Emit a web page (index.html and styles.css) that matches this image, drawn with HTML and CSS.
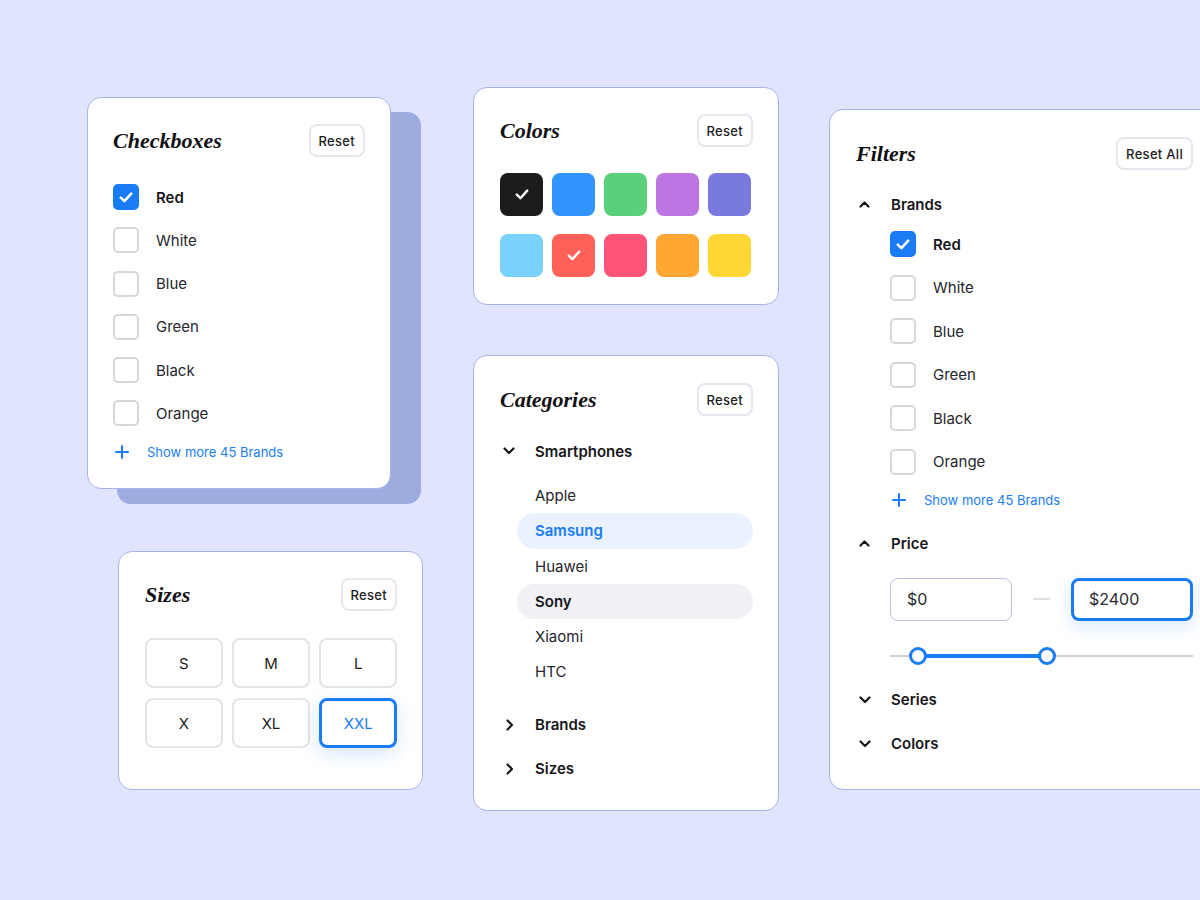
FILE: index.html
```html
<!DOCTYPE html>
<html lang="en">
<head>
  <meta charset="UTF-8">
  <title>Filters - UI kit</title>
  <link rel="stylesheet" href="styles.css">
</head>
<body>
  <main class="board">

    <div class="col col-left">
      <section class="card card-stacked checkboxes">
        <header class="card-head">
          <h2>Checkboxes</h2>
          <button class="reset">Reset</button>
        </header>
        <ul class="check-list">
          <li class="check on"><span class="box"><svg width="14" height="11" viewBox="0 0 14 11"><path d="M1.8 5.6l3.6 3.6 6.8-7.6"/></svg></span>Red</li>
          <li class="check"><span class="box"></span>White</li>
          <li class="check"><span class="box"></span>Blue</li>
          <li class="check"><span class="box"></span>Green</li>
          <li class="check"><span class="box"></span>Black</li>
          <li class="check"><span class="box"></span>Orange</li>
        </ul>
        <a class="more" href="#"><svg width="14" height="14" viewBox="0 0 14 14"><path d="M7 1v12M1 7h12"/></svg>Show more 45 Brands</a>
      </section>

      <section class="card sizes">
        <header class="card-head">
          <h2>Sizes</h2>
          <button class="reset">Reset</button>
        </header>
        <div class="size-grid">
          <button class="size">S</button>
          <button class="size">M</button>
          <button class="size">L</button>
          <button class="size">X</button>
          <button class="size">XL</button>
          <button class="size active">XXL</button>
        </div>
      </section>
    </div>

    <div class="col col-mid">
      <section class="card colors">
        <header class="card-head">
          <h2>Colors</h2>
          <button class="reset">Reset</button>
        </header>
        <div class="swatches">
          <span class="swatch sw-black on"><svg width="14" height="11" viewBox="0 0 14 11"><path d="M1.8 5.6l3.6 3.6 6.8-7.6"/></svg></span>
          <span class="swatch sw-blue"></span>
          <span class="swatch sw-green"></span>
          <span class="swatch sw-purple"></span>
          <span class="swatch sw-indigo"></span>
          <span class="swatch sw-sky"></span>
          <span class="swatch sw-red on"><svg width="14" height="11" viewBox="0 0 14 11"><path d="M1.8 5.6l3.6 3.6 6.8-7.6"/></svg></span>
          <span class="swatch sw-pink"></span>
          <span class="swatch sw-orange"></span>
          <span class="swatch sw-yellow"></span>
        </div>
      </section>

      <section class="card categories">
        <header class="card-head">
          <h2>Categories</h2>
          <button class="reset">Reset</button>
        </header>
        <div class="toggle first">
          <span class="ico"><svg class="chev-down" width="12" height="8" viewBox="0 0 12 8"><path d="M1.5 1.5 6 6l4.5-4.5"/></svg></span>Smartphones
        </div>
        <ul class="sub-list">
          <li>Apple</li>
          <li class="selected">Samsung</li>
          <li>Huawei</li>
          <li class="hovered">Sony</li>
          <li>Xiaomi</li>
          <li>HTC</li>
        </ul>
        <div class="toggle after-list">
          <span class="ico"><svg class="chev-right" width="8" height="12" viewBox="0 0 8 12"><path d="M1.5 1.5 6 6l-4.5 4.5"/></svg></span>Brands
        </div>
        <div class="toggle next">
          <span class="ico"><svg class="chev-right" width="8" height="12" viewBox="0 0 8 12"><path d="M1.5 1.5 6 6l-4.5 4.5"/></svg></span>Sizes
        </div>
      </section>
    </div>

    <div class="col col-right">
      <section class="card filters">
        <header class="card-head">
          <h2>Filters</h2>
          <button class="reset">Reset All</button>
        </header>

        <div class="toggle first">
          <span class="ico"><svg class="chev-up" width="11" height="7" viewBox="0 0 11 7"><path d="M1.5 5.5 5.5 1.5l4 4"/></svg></span>Brands
        </div>
        <div class="indent">
          <ul class="check-list">
            <li class="check on"><span class="box"><svg width="14" height="11" viewBox="0 0 14 11"><path d="M1.8 5.6l3.6 3.6 6.8-7.6"/></svg></span>Red</li>
            <li class="check"><span class="box"></span>White</li>
            <li class="check"><span class="box"></span>Blue</li>
            <li class="check"><span class="box"></span>Green</li>
            <li class="check"><span class="box"></span>Black</li>
            <li class="check"><span class="box"></span>Orange</li>
          </ul>
          <a class="more" href="#"><svg width="14" height="14" viewBox="0 0 14 14"><path d="M7 1v12M1 7h12"/></svg>Show more 45 Brands</a>
        </div>

        <div class="toggle price-head">
          <span class="ico"><svg class="chev-up" width="11" height="7" viewBox="0 0 11 7"><path d="M1.5 5.5 5.5 1.5l4 4"/></svg></span>Price
        </div>
        <div class="indent price">
          <div class="price-fields">
            <input class="field" type="text" value="$0" readonly>
            <span class="dash"></span>
            <input class="field focus" type="text" value="$2400" readonly>
          </div>
          <div class="range">
            <span class="range-fill"></span>
            <span class="thumb thumb-min"></span>
            <span class="thumb thumb-max"></span>
          </div>
        </div>

        <div class="toggle series">
          <span class="ico"><svg class="chev-down" width="12" height="8" viewBox="0 0 12 8"><path d="M1.5 1.5 6 6l4.5-4.5"/></svg></span>Series
        </div>
        <div class="toggle next">
          <span class="ico"><svg class="chev-down" width="12" height="8" viewBox="0 0 12 8"><path d="M1.5 1.5 6 6l4.5-4.5"/></svg></span>Colors
        </div>
      </section>
    </div>

  </main>
</body>
</html>
```

FILE: styles.css
```css
html, body {
  margin: 0;
  height: 100%;
  overflow: hidden;
}
body {
  background: #e0e4fd;
  font-family: Inter, 'Noto Sans', sans-serif;
  color: #1d1d22;
}
ul {
  list-style: none;
  margin: 0;
  padding: 0;
}

.board {
  display: flex;
  align-items: flex-start;
  gap: 50px;
  padding-left: 87px;
}
.col {
  display: flex;
  flex-direction: column;
  align-items: flex-start;
  flex-shrink: 0;
}
.col-left { padding-top: 97px; }
.col-mid { padding-top: 87px; }
.col-right { padding-top: 109px; }

/* cards */
.card {
  box-sizing: border-box;
  background: #fff;
  border: 1px solid #a6b3ee;
  border-radius: 14px;
  padding: 26px 25px 0 25px;
}
.card-stacked {
  box-shadow: 30px 15px 0 0 #9cacdf;
}
.checkboxes { width: 304px; height: 392px; }
.sizes { width: 305px; height: 239px; margin: 62px 0 0 31px; padding-left: 26px; }
.colors { width: 306px; height: 218px; padding-left: 26px; }
.categories { width: 306px; height: 456px; margin-top: 50px; padding-left: 26px; padding-top: 27px; }
.filters { width: 392px; height: 681px; padding-left: 26px; padding-top: 27px; padding-right: 27px; }

.card-head {
  display: flex;
  justify-content: space-between;
  align-items: center;
  height: 33px;
}
.card-head h2 {
  margin: 0;
  font-family: 'Liberation Serif', 'DejaVu Serif', serif;
  font-style: italic;
  font-weight: bold;
  font-size: 22px;
  color: #111114;
}
.reset {
  box-sizing: border-box;
  height: 33px;
  padding: 0 8px;
  border: 2px solid #e6e6ee;
  border-radius: 8px;
  background: #fff;
  font-family: inherit;
  font-size: 13px;
  font-weight: 500;
  color: #1d1d22;
  letter-spacing: 0.3px;
}

/* checkbox list */
.check-list {
  display: flex;
  flex-direction: column;
  gap: 17.3px;
  margin-top: 27px;
}
.check {
  display: flex;
  align-items: center;
  height: 26px;
  font-size: 15px;
  color: #26262b;
}
.check .box {
  box-sizing: border-box;
  width: 26px;
  height: 26px;
  margin-right: 17px;
  border: 2px solid #d6d6dc;
  border-radius: 5px;
  display: flex;
  align-items: center;
  justify-content: center;
}
.check.on {
  font-weight: 600;
  color: #16161a;
}
.check.on .box {
  background: #1a7cf5;
  border-color: #1a7cf5;
}
.check svg path,
.swatch svg path {
  fill: none;
  stroke: #fff;
  stroke-width: 2.6;
  stroke-linecap: round;
  stroke-linejoin: round;
}
.more {
  display: flex;
  align-items: center;
  height: 20px;
  margin-top: 16px;
  font-size: 13px;
  color: #1a7cf5;
  text-decoration: none;
}
.more svg {
  margin: 0 18px 0 2px;
}
.more svg path {
  stroke: #1a7cf5;
  stroke-width: 2;
  stroke-linecap: round;
}

/* sizes */
.size-grid {
  display: grid;
  grid-template-columns: repeat(3, 1fr);
  gap: 10px 9.5px;
  margin-top: 27px;
}
.size {
  box-sizing: border-box;
  height: 50px;
  border: 2px solid #e3e3e9;
  border-radius: 8px;
  background: #fff;
  font-family: inherit;
  font-size: 15px;
  color: #1d1d22;
}
.size.active {
  border: 3px solid #1a7cf5;
  color: #1a7cf5;
  box-shadow: 0 6px 18px rgba(26, 124, 245, 0.18);
}

/* colors */
.swatches {
  display: grid;
  grid-template-columns: repeat(5, 43px);
  gap: 18px 9px;
  margin-top: 26px;
}
.swatch {
  width: 43px;
  height: 43px;
  border-radius: 8px;
  display: flex;
  align-items: center;
  justify-content: center;
}
.sw-black { background: #1c1c1f; }
.sw-blue { background: #3294fe; }
.sw-green { background: #5ad07a; }
.sw-purple { background: #be75e4; }
.sw-indigo { background: #7a79de; }
.sw-sky { background: #79d2fb; }
.sw-red { background: #ff6057; }
.sw-pink { background: #ff5478; }
.sw-orange { background: #ffa733; }
.sw-yellow { background: #ffd633; }
.swatch svg path { stroke-width: 2.4; }

/* collapsible rows */
.toggle {
  display: flex;
  align-items: center;
  height: 24px;
  font-size: 15px;
  font-weight: 600;
  color: #16161a;
}
.toggle .ico {
  width: 35px;
  display: flex;
  align-items: center;
  flex-shrink: 0;
}
.toggle svg path {
  fill: none;
  stroke: #16161a;
  stroke-width: 2.2;
  stroke-linecap: round;
  stroke-linejoin: round;
}
.chev-down { margin-left: 3px; }
.chev-right { margin-left: 6px; }
.chev-up { margin-left: 3px; }
.toggle.first { margin-top: 23px; }
.toggle.next { margin-top: 20px; }

.sub-list {
  margin: 15px 0 0 17px;
}
.sub-list li {
  height: 35.3px;
  line-height: 35.3px;
  padding-left: 18px;
  border-radius: 18px;
  font-size: 15px;
  color: #26262b;
}
.sub-list .selected {
  background: #e9f2fe;
  color: #1a7cf5;
  font-weight: 600;
}
.sub-list .hovered {
  background: #f0f0f5;
  color: #16161a;
  font-weight: 600;
}
.toggle.after-list { margin-top: 23px; }

/* filters panel */
.filters .toggle.first { margin-top: 22px; }
.indent { padding-left: 34px; }
.filters .check-list { margin-top: 15px; gap: 17.5px; }
.filters .more { margin-top: 15px; }
.price-head { margin-top: 22px; }
.price { width: 303px; }
.price-fields {
  display: flex;
  align-items: center;
  justify-content: space-between;
  margin-top: 22px;
}
.field {
  box-sizing: border-box;
  width: 122px;
  height: 43px;
  padding: 0 0 0 16px;
  border: 1.5px solid #bfbde2;
  border-radius: 8px;
  font-family: inherit;
  font-size: 16px;
  color: #2a2a30;
  outline: none;
}
.field.focus {
  border: 3px solid #1a7cf5;
  padding-left: 15px;
  box-shadow: 0 6px 18px rgba(26, 124, 245, 0.16);
}
.dash {
  width: 17px;
  height: 2px;
  background: #dfdfe5;
}
.range {
  position: relative;
  height: 18px;
  margin-top: 26px;
}
.range::before {
  content: '';
  position: absolute;
  left: 0;
  right: 0;
  top: 8px;
  height: 2px;
  background: #cfcfd6;
}
.range-fill {
  position: absolute;
  left: 28px;
  width: 129px;
  top: 7px;
  height: 4px;
  background: #1a7cf5;
}
.thumb {
  position: absolute;
  top: 0;
  box-sizing: border-box;
  width: 18px;
  height: 18px;
  border: 3px solid #1a7cf5;
  border-radius: 50%;
  background: #fff;
}
.thumb-min { left: 19px; }
.thumb-max { left: 148px; }
.series { margin-top: 23px; }
```
